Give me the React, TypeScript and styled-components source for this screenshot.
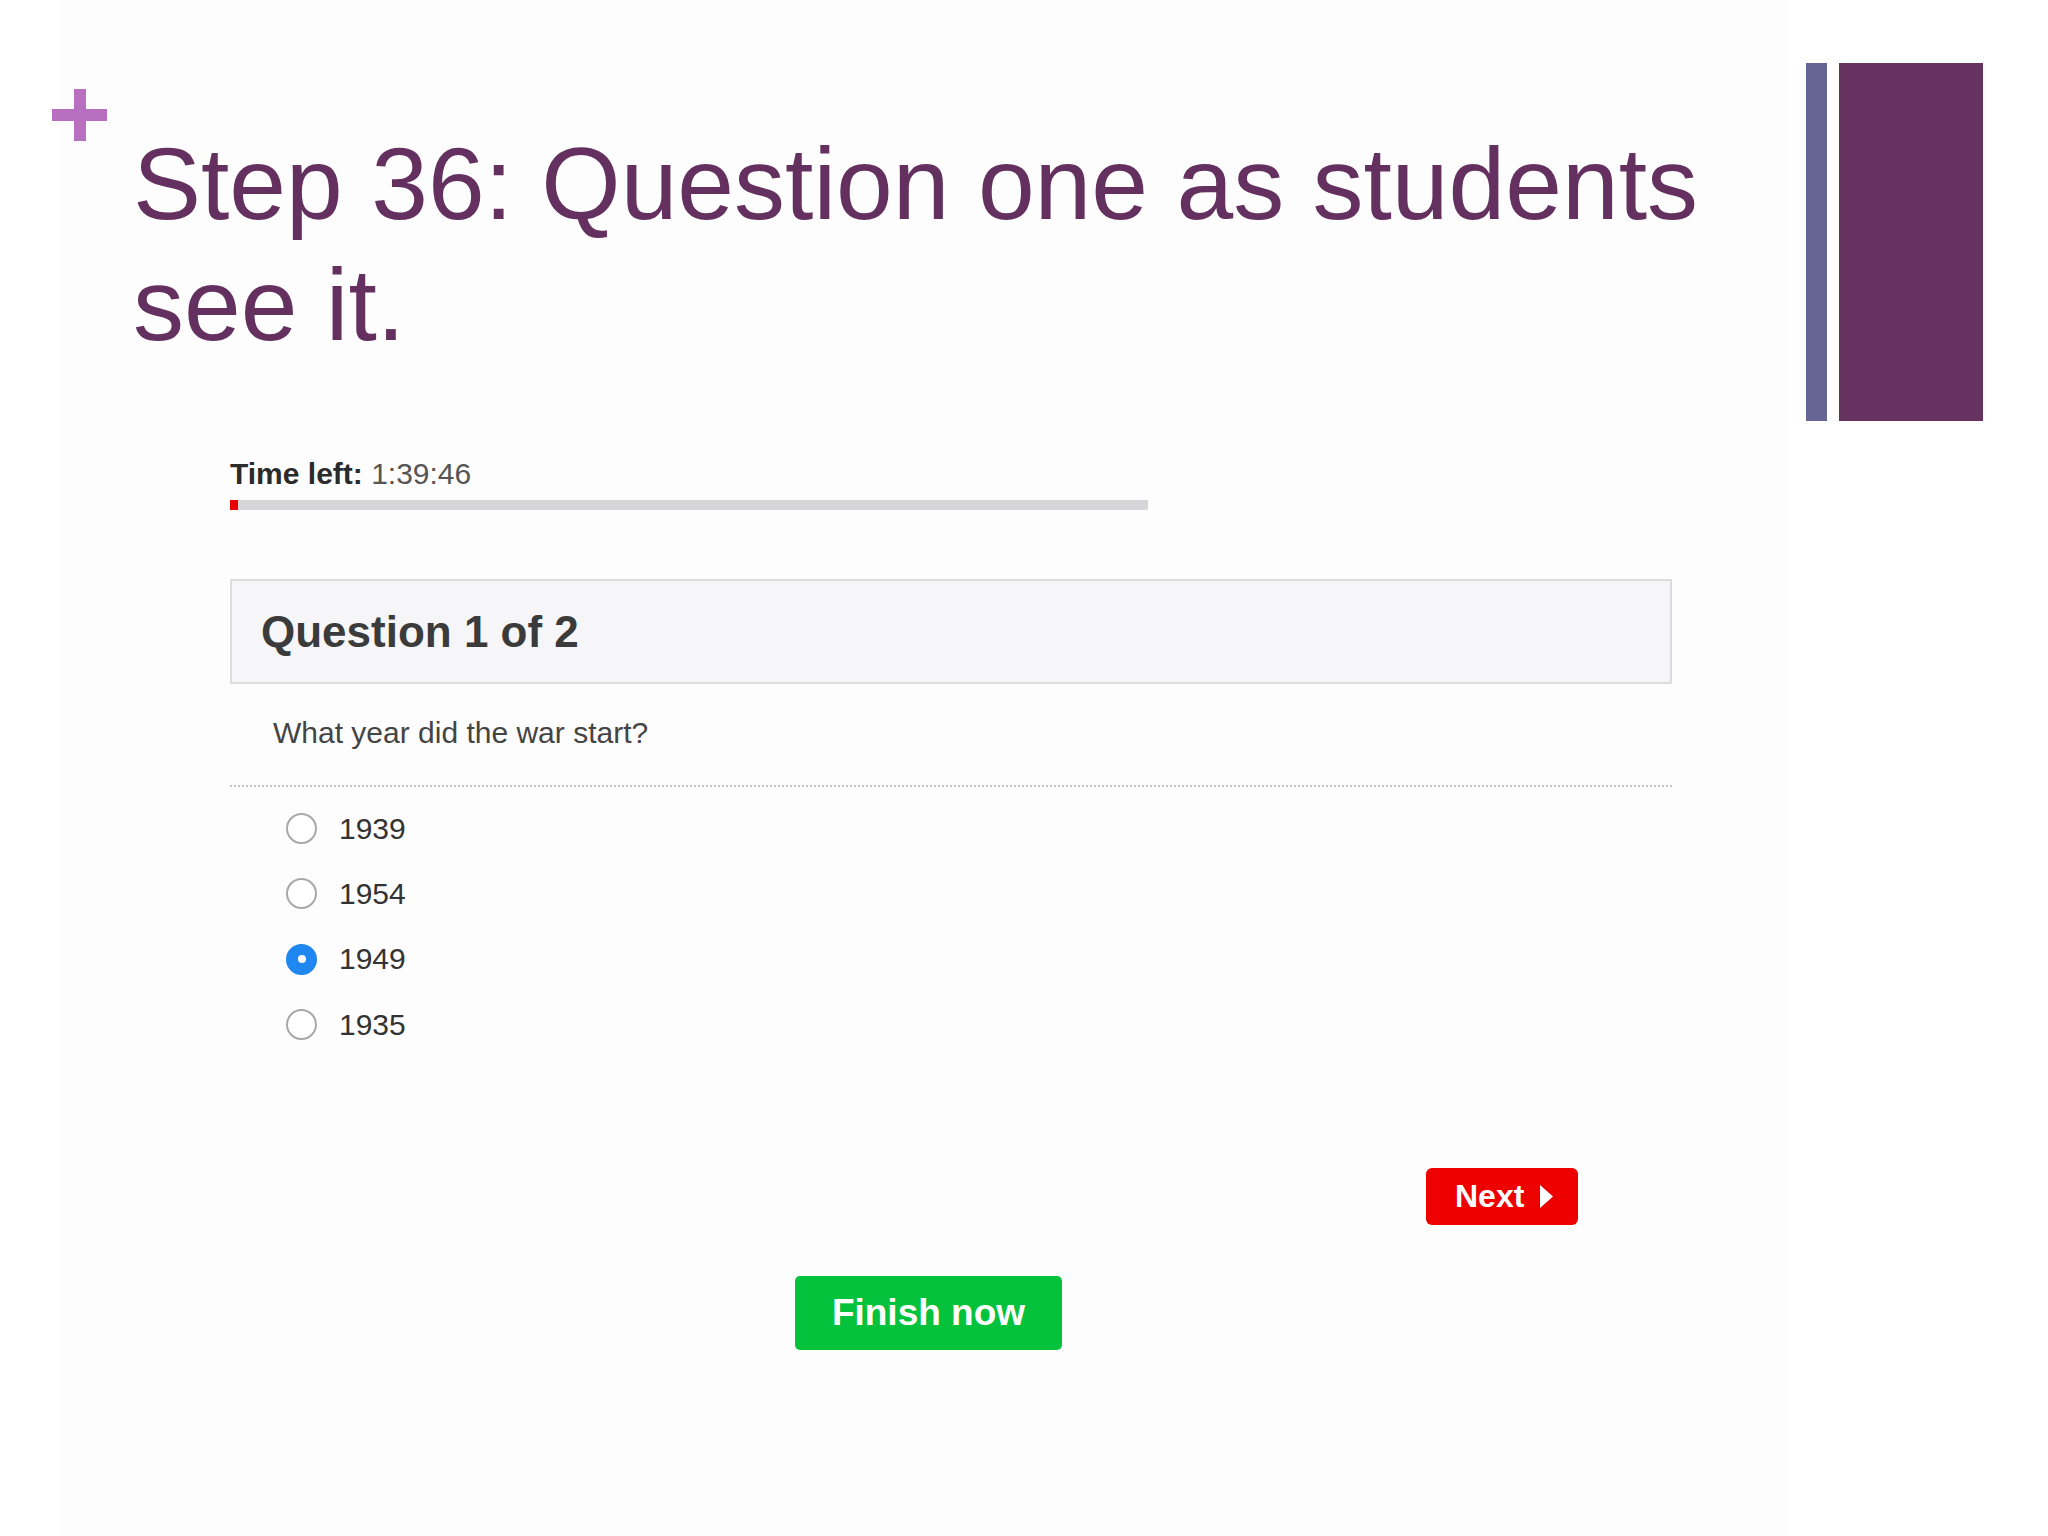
import React from 'react';
import styled, {createGlobalStyle} from 'styled-components';

const GlobalStyle = createGlobalStyle`
  html, body {
    margin: 0;
    padding: 0;
    background: #ffffff;
  }
  body {
    font-family: "Liberation Sans", Arial, Helvetica, sans-serif;
  }
`

const options = ['1939', '1954', '1949', '1935']
const selected = '1949'
const timeUsed = 0.009

export default function App() {
    return (
        <>
            <GlobalStyle/>
            <Slide>
                <Header>
                    <PlusMark width="55" height="52" viewBox="0 0 55 52">
                        <rect x="0" y="20" width="55" height="12" fill="#b96fbf"/>
                        <rect x="22" y="0" width="12" height="52" fill="#b96fbf"/>
                    </PlusMark>
                    <Title>Step 36: Question one as students see it.</Title>
                    <Bars>
                        <Bar $w={21} $color="#676594"/>
                        <Bar $w={144} $color="#663361"/>
                    </Bars>
                </Header>

                <Quiz>
                    <Timer><b>Time left:</b> 1:39:46</Timer>
                    <Track>
                        <TrackFill style={{width: `${timeUsed * 100}%`}}/>
                    </Track>

                    <QuestionHead>Question 1 of 2</QuestionHead>
                    <QuestionText>What year did the war start?</QuestionText>
                    <Divider/>

                    <OptionList>
                        {options.map(o => (
                            <Option key={o}>
                                <Radio $checked={o === selected}/>
                                <span>{o}</span>
                            </Option>
                        ))}
                    </OptionList>

                    <NextRow>
                        <NextButton>
                            Next
                            <svg width="13" height="23" viewBox="0 0 13 23">
                                <polygon points="0,0 13,11.5 0,23" fill="#ffffff"/>
                            </svg>
                        </NextButton>
                    </NextRow>

                    <FinishRow>
                        <FinishButton>Finish now</FinishButton>
                    </FinishRow>
                </Quiz>
            </Slide>
        </>
    );
}

const Slide = styled.main`
  width: 2048px;
  height: 1536px;
  overflow: hidden;
  display: flex;
  flex-direction: column;
  background: linear-gradient(to right, #ffffff 0 61px, #fdfdfd 61px 1790px, #ffffff 1790px);
`

const Header = styled.header`
  display: flex;
  align-items: flex-start;
  padding: 63px 65px 0 52px;
`

const PlusMark = styled.svg`
  flex: none;
  margin-top: 26px;
`

const Title = styled.h1`
  flex: 1;
  margin: 61px 0 0 26px;
  font-size: 102px;
  line-height: 121px;
  font-weight: 400;
  color: #64305f;
`

const Bars = styled.div`
  flex: none;
  display: flex;
  gap: 12px;
  height: 358px;
`

const Bar = styled.div<{ $w: number; $color: string }>`
  width: ${p => p.$w}px;
  background: ${p => p.$color};
`

const Quiz = styled.section`
  width: 1442px;
  margin: 35px 0 0 230px;
  display: flex;
  flex-direction: column;
`

const Timer = styled.div`
  font-size: 30px;
  line-height: 36px;
  color: #555555;

  & b {
    color: #2b2b2b;
    font-weight: 700;
  }
`

const Track = styled.div`
  width: 918px;
  height: 10px;
  margin-top: 8px;
  background: #d6d6d9;
`

const TrackFill = styled.div`
  height: 100%;
  min-width: 8px;
  background: #e60000;
`

const QuestionHead = styled.h2`
  box-sizing: border-box;
  height: 105px;
  margin: 69px 0 0;
  padding-left: 29px;
  display: flex;
  align-items: center;
  border: 2px solid #dcdcdc;
  background: #f6f6f8;
  font-size: 44px;
  font-weight: 700;
  color: #3b3b3b;
`

const QuestionText = styled.p`
  margin: 31px 0 0;
  padding-left: 43px;
  font-size: 30px;
  line-height: 36px;
  color: #444444;
`

const Divider = styled.div`
  margin-top: 34px;
  border-top: 2px dotted #c4c4c4;
`

const OptionList = styled.div`
  margin-top: 9px;
  display: flex;
  flex-direction: column;
`

const Option = styled.label`
  height: 65.3px;
  padding-left: 56px;
  display: flex;
  align-items: center;
  gap: 22px;
  font-size: 30px;
  color: #333333;
`

const Radio = styled.span<{ $checked: boolean }>`
  box-sizing: border-box;
  width: 31px;
  height: 31px;
  border-radius: 50%;
  border: 2px solid ${p => p.$checked ? '#1f87f0' : '#a8a8a8'};
  background: ${p => p.$checked ? '#1f87f0' : '#ffffff'};
  display: flex;
  align-items: center;
  justify-content: center;

  &::after {
    content: '';
    display: ${p => p.$checked ? 'block' : 'none'};
    width: 8px;
    height: 8px;
    border-radius: 50%;
    background: #ffffff;
  }
`

const NextRow = styled.div`
  margin-top: 111px;
  padding-right: 94px;
  display: flex;
  justify-content: flex-end;
`

const NextButton = styled.button`
  box-sizing: border-box;
  width: 152px;
  height: 57px;
  padding: 0 23px 0 29px;
  display: flex;
  align-items: center;
  gap: 16px;
  border: none;
  border-radius: 6px;
  background: #ee0000;
  color: #ffffff;
  font-family: inherit;
  font-size: 32px;
  font-weight: 700;
`

const FinishRow = styled.div`
  margin-top: 51px;
  padding-left: 565px;
  display: flex;
`

const FinishButton = styled.button`
  width: 267px;
  height: 74px;
  border: none;
  border-radius: 5px;
  background: #04c23b;
  color: #ffffff;
  font-family: inherit;
  font-size: 37px;
  font-weight: 700;
`
